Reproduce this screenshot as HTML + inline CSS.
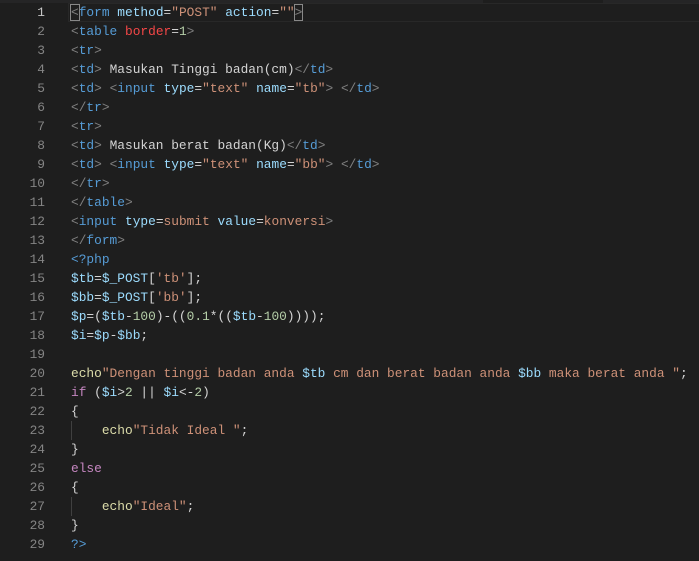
<!DOCTYPE html>
<html><head><style>
html,body{margin:0;padding:0;background:#1e1e1e;width:699px;height:561px;overflow:hidden}
.top{position:absolute;left:0;top:0;width:699px;height:3px;background:#252526}
.top i{position:absolute;top:0;height:3px;background:#1e1e1e}
.hl{position:absolute;left:68px;top:3px;width:631px;height:17px;border:1px solid #282828;border-right:none}
.ln{position:absolute;left:0;width:45px;text-align:right;color:#858585}
.c{position:absolute;left:71px;white-space:pre;color:#d4d4d4}
.ln,.c{font-family:"Liberation Mono",monospace;font-size:12.85px;line-height:19px;height:19px}
.g{color:#808080}.t{color:#569cd6}.a{color:#9cdcfe}.s{color:#ce9178}.r{color:#f44747}.n{color:#b5cea8}.v{color:#9cdcfe}.f{color:#dcdcaa}.k{color:#c586c0}
.ind{position:absolute;left:71px;width:1px;height:19px;background:#404040}
.bx{outline:1px solid #888}
</style></head><body>
<div class="top"><i style="left:483px;width:120px"></i></div>
<div class="hl"></div>
<div class="ln" style="top:3px;color:#c6c6c6">1</div>
<div class="c" style="top:3px"><span class="g bx">&lt;</span><span class="t">form</span> <span class="a">method</span>=<span class="s">"POST"</span> <span class="a">action</span>=<span class="s">""</span><span class="g bx">&gt;</span></div>
<div class="ln" style="top:22px">2</div><div class="c" style="top:22px"><span class="g">&lt;</span><span class="t">table</span> <span class="r">border</span>=<span class="n">1</span><span class="g">&gt;</span></div>
<div class="ln" style="top:41px">3</div><div class="c" style="top:41px"><span class="g">&lt;</span><span class="t">tr</span><span class="g">&gt;</span></div>
<div class="ln" style="top:60px">4</div><div class="c" style="top:60px"><span class="g">&lt;</span><span class="t">td</span><span class="g">&gt;</span> Masukan Tinggi badan(cm)<span class="g">&lt;/</span><span class="t">td</span><span class="g">&gt;</span></div>
<div class="ln" style="top:79px">5</div><div class="c" style="top:79px"><span class="g">&lt;</span><span class="t">td</span><span class="g">&gt;</span> <span class="g">&lt;</span><span class="t">input</span> <span class="a">type</span>=<span class="s">"text"</span> <span class="a">name</span>=<span class="s">"tb"</span><span class="g">&gt;</span> <span class="g">&lt;/</span><span class="t">td</span><span class="g">&gt;</span></div>
<div class="ln" style="top:98px">6</div><div class="c" style="top:98px"><span class="g">&lt;/</span><span class="t">tr</span><span class="g">&gt;</span></div>
<div class="ln" style="top:117px">7</div><div class="c" style="top:117px"><span class="g">&lt;</span><span class="t">tr</span><span class="g">&gt;</span></div>
<div class="ln" style="top:136px">8</div><div class="c" style="top:136px"><span class="g">&lt;</span><span class="t">td</span><span class="g">&gt;</span> Masukan berat badan(Kg)<span class="g">&lt;/</span><span class="t">td</span><span class="g">&gt;</span></div>
<div class="ln" style="top:155px">9</div><div class="c" style="top:155px"><span class="g">&lt;</span><span class="t">td</span><span class="g">&gt;</span> <span class="g">&lt;</span><span class="t">input</span> <span class="a">type</span>=<span class="s">"text"</span> <span class="a">name</span>=<span class="s">"bb"</span><span class="g">&gt;</span> <span class="g">&lt;/</span><span class="t">td</span><span class="g">&gt;</span></div>
<div class="ln" style="top:174px">10</div><div class="c" style="top:174px"><span class="g">&lt;/</span><span class="t">tr</span><span class="g">&gt;</span></div>
<div class="ln" style="top:193px">11</div><div class="c" style="top:193px"><span class="g">&lt;/</span><span class="t">table</span><span class="g">&gt;</span></div>
<div class="ln" style="top:212px">12</div><div class="c" style="top:212px"><span class="g">&lt;</span><span class="t">input</span> <span class="a">type</span>=<span class="s">submit</span> <span class="a">value</span>=<span class="s">konversi</span><span class="g">&gt;</span></div>
<div class="ln" style="top:231px">13</div><div class="c" style="top:231px"><span class="g">&lt;/</span><span class="t">form</span><span class="g">&gt;</span></div>
<div class="ln" style="top:250px">14</div><div class="c" style="top:250px"><span class="t">&lt;?php</span></div>
<div class="ln" style="top:269px">15</div><div class="c" style="top:269px"><span class="v">$tb</span>=<span class="v">$_POST</span>[<span class="s">'tb'</span>];</div>
<div class="ln" style="top:288px">16</div><div class="c" style="top:288px"><span class="v">$bb</span>=<span class="v">$_POST</span>[<span class="s">'bb'</span>];</div>
<div class="ln" style="top:307px">17</div><div class="c" style="top:307px"><span class="v">$p</span>=(<span class="v">$tb</span>-<span class="n">100</span>)-((<span class="n">0.1</span>*((<span class="v">$tb</span>-<span class="n">100</span>))));</div>
<div class="ln" style="top:326px">18</div><div class="c" style="top:326px"><span class="v">$i</span>=<span class="v">$p</span>-<span class="v">$bb</span>;</div>
<div class="ln" style="top:345px">19</div>
<div class="ln" style="top:364px">20</div><div class="c" style="top:364px"><span class="f">echo</span><span class="s">"Dengan tinggi badan anda </span><span class="v">$tb</span><span class="s"> cm dan berat badan anda </span><span class="v">$bb</span><span class="s"> maka berat anda "</span>;</div>
<div class="ln" style="top:383px">21</div><div class="c" style="top:383px"><span class="k">if</span> (<span class="v">$i</span>&gt;<span class="n">2</span> || <span class="v">$i</span>&lt;-<span class="n">2</span>)</div>
<div class="ln" style="top:402px">22</div><div class="c" style="top:402px">{</div>
<div class="ln" style="top:421px">23</div><div class="ind" style="top:421px"></div><div class="c" style="top:421px">    <span class="f">echo</span><span class="s">"Tidak Ideal "</span>;</div>
<div class="ln" style="top:440px">24</div><div class="c" style="top:440px">}</div>
<div class="ln" style="top:459px">25</div><div class="c" style="top:459px"><span class="k">else</span></div>
<div class="ln" style="top:478px">26</div><div class="c" style="top:478px">{</div>
<div class="ln" style="top:497px">27</div><div class="ind" style="top:497px"></div><div class="c" style="top:497px">    <span class="f">echo</span><span class="s">"Ideal"</span>;</div>
<div class="ln" style="top:516px">28</div><div class="c" style="top:516px">}</div>
<div class="ln" style="top:535px">29</div><div class="c" style="top:535px"><span class="t">?&gt;</span></div>
</body></html>
